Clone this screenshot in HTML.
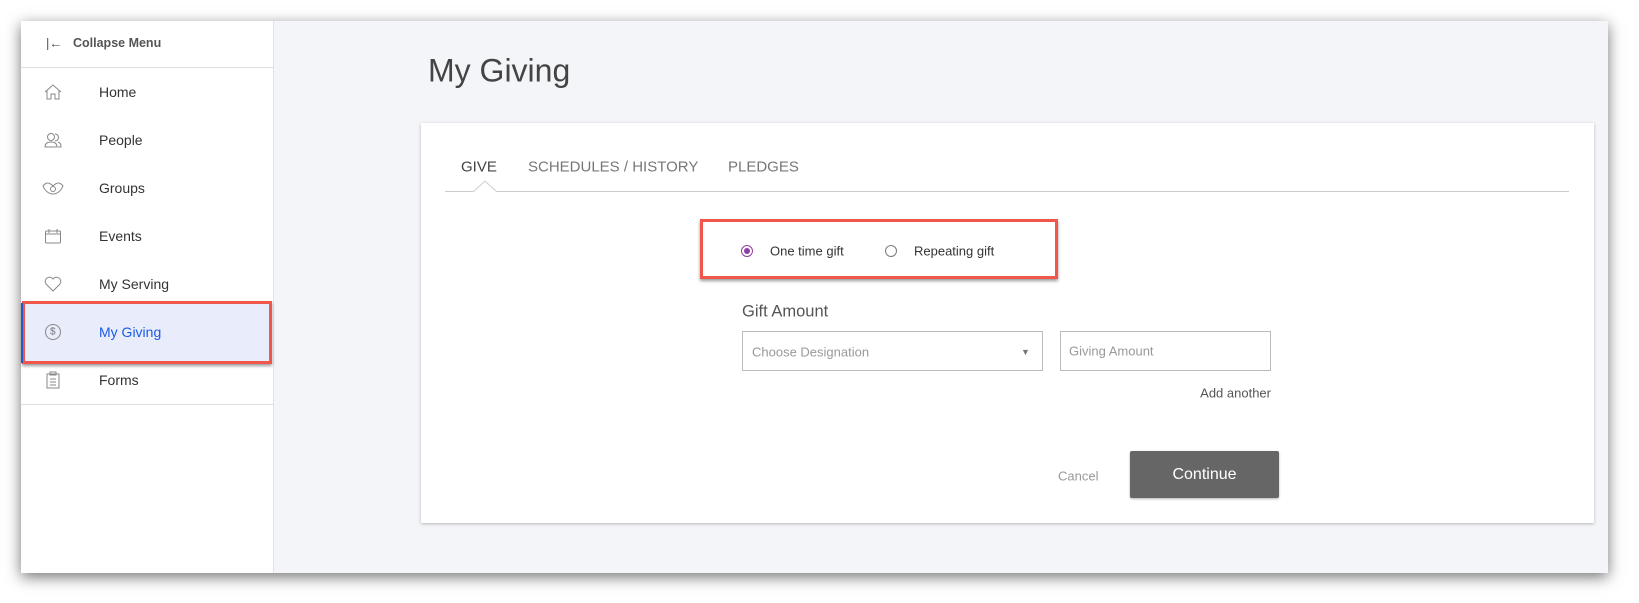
<!DOCTYPE html>
<html><head><meta charset="utf-8"><style>
*{box-sizing:border-box;margin:0;padding:0}
body{width:1639px;height:603px;background:#fff;font-family:"Liberation Sans",sans-serif;position:relative;overflow:hidden}
.win{position:absolute;left:21px;top:21px;width:1587px;height:552px;background:#f4f5f9;box-shadow:0 4px 14px rgba(0,0,0,.55)}
.side{position:absolute;left:0;top:0;width:253px;height:552px;background:#fff;border-right:1px solid #e2e3e8}
.a{position:absolute}
.t{position:absolute;white-space:nowrap;transform:translateY(-50%)}
.nav{font-size:14px;color:#333}
.ico{position:absolute;transform:translate(-50%,-50%)}
</style></head><body>
<div class="win">
 <div class="side">
  <div class="t" style="left:25px;top:22px;font-size:13px;color:#555">|&#8592;</div>
  <div class="t" style="left:52px;top:22px;font-size:12.5px;font-weight:bold;color:#555">Collapse Menu</div>
  <div class="a" style="left:0;top:46px;width:253px;height:1px;background:#ddd"></div>
  <svg class="ico" style="left:32px;top:71px" width="18" height="16" viewBox="0 0 18 16" fill="none" stroke="#888" stroke-width="1"><path d="M1 8 9 1l8 7M3 6v9h4v-5h4v5h4V6"/></svg>
  <div class="t nav" style="left:78px;top:71px">Home</div>
  <svg class="ico" style="left:32px;top:119px" width="18" height="16" viewBox="0 0 18 16" fill="none" stroke="#888"><circle cx="7" cy="5" r="3.5"/><path d="M1 15c0-4 3-5 6-5s6 1 6 5zM11 2a3.5 3.5 0 0 1 0 7M14 10c2 .5 3 2 3 5h-3"/></svg>
  <div class="t nav" style="left:78px;top:119px">People</div>
  <svg class="ico" style="left:32px;top:167px" width="22" height="14" viewBox="0 0 22 14" fill="none" stroke="#888"><path d="M1 5c3-4 6-4 10 0 4-4 7-4 10 0-2 5-6 8-10 8S3 10 1 5z"/><circle cx="11" cy="8" r="2.5"/></svg>
  <div class="t nav" style="left:78px;top:167px">Groups</div>
  <svg class="ico" style="left:32px;top:215px" width="18" height="16" viewBox="0 0 18 16" fill="none" stroke="#888"><rect x="1.5" y="3" width="15" height="12" rx="1"/><path d="M5 1v4M13 1v4M1.5 6h15"/></svg>
  <div class="t nav" style="left:78px;top:215px">Events</div>
  <svg class="ico" style="left:32px;top:263px" width="18" height="16" viewBox="0 0 18 16" fill="none" stroke="#888"><path d="M9 15 2 8a4 4 0 0 1 7-5 4 4 0 0 1 7 5z"/></svg>
  <div class="t nav" style="left:78px;top:263px">My Serving</div>
  <div class="a" style="left:1px;top:280px;width:250px;height:63px;background:#e8ecfb;border:3px solid #f0564a;box-shadow:0 2px 3px rgba(0,0,0,.4)"></div>
  <div class="a" style="left:0;top:282px;width:2px;height:60px;background:#2a55c8"></div>
  <svg class="ico" style="left:32px;top:311px" width="18" height="18" viewBox="0 0 18 18" fill="none" stroke="#888"><circle cx="9" cy="9" r="7.5"/></svg>
  <div class="t" style="left:29px;top:311px;font-size:10px;color:#777">$</div>
  <div class="t nav" style="left:78px;top:311px;color:#1a5ce8">My Giving</div>
  <svg class="ico" style="left:32px;top:359px" width="14" height="18" viewBox="0 0 14 18" fill="none" stroke="#888"><rect x="1" y="3" width="12" height="14"/><path d="M4 1h6v3H4zM4 8h6M4 11h6M4 14h6"/></svg>
  <div class="t nav" style="left:78px;top:359px">Forms</div>
  <div class="a" style="left:0;top:383px;width:253px;height:1px;background:#ddd"></div>
 </div>
 <div class="t" style="left:407px;top:50px;font-size:32px;color:#444">My Giving</div>
 <div class="a" style="left:400px;top:102px;width:1173px;height:400px;background:#fff;box-shadow:0 1px 3px rgba(0,0,0,.25)">
  <div class="t" style="left:40px;top:44px;font-size:15px;color:#444">GIVE</div>
  <div class="t" style="left:107px;top:44px;font-size:15px;color:#777">SCHEDULES / HISTORY</div>
  <div class="t" style="left:307px;top:44px;font-size:15px;color:#777">PLEDGES</div>
  <div class="a" style="left:24px;top:68px;width:1124px;height:1px;background:#ccc"></div>
  <svg class="a" style="left:52px;top:57px" width="24" height="13" viewBox="0 0 24 13"><path d="M0 12 12 1l12 11" fill="#fff" stroke="#ccc"/></svg>
  <div class="a" style="left:279px;top:96px;width:358px;height:60px;border:3px solid #f0564a;box-shadow:0 2px 3px rgba(0,0,0,.4)"></div>
  <div class="a" style="left:320px;top:122px;width:12px;height:12px;border:1px solid #8e3ea0;border-radius:50%"></div>
  <div class="a" style="left:323px;top:125px;width:6px;height:6px;background:#8e3ea0;border-radius:50%"></div>
  <div class="t" style="left:349px;top:128px;font-size:13px;color:#333">One time gift</div>
  <div class="a" style="left:464px;top:122px;width:12px;height:12px;border:1px solid #777;border-radius:50%"></div>
  <div class="t" style="left:493px;top:128px;font-size:13px;color:#333">Repeating gift</div>
  <div class="t" style="left:321px;top:189px;font-size:16.5px;color:#555">Gift Amount</div>
  <div class="a" style="left:321px;top:208px;width:301px;height:40px;border:1px solid #bbb"></div>
  <div class="t" style="left:331px;top:229px;font-size:13px;color:#999">Choose Designation</div>
  <div class="t" style="left:600px;top:229px;font-size:9px;color:#777">&#9660;</div>
  <div class="a" style="left:639px;top:208px;width:211px;height:40px;border:1px solid #bbb"></div>
  <div class="t" style="left:648px;top:228px;font-size:13px;color:#999">Giving Amount</div>
  <div class="t" style="right:323px;top:270px;font-size:13px;color:#555">Add another</div>
  <div class="t" style="left:637px;top:353px;font-size:13px;color:#999">Cancel</div>
  <div class="a" style="left:709px;top:328px;width:149px;height:47px;background:#666;border-radius:2px;box-shadow:0 1px 2px rgba(0,0,0,.3)"></div>
  <div class="t" style="left:709px;top:352px;width:149px;text-align:center;font-size:16px;color:#fff">Continue</div>
 </div>
</div>
</body></html>
